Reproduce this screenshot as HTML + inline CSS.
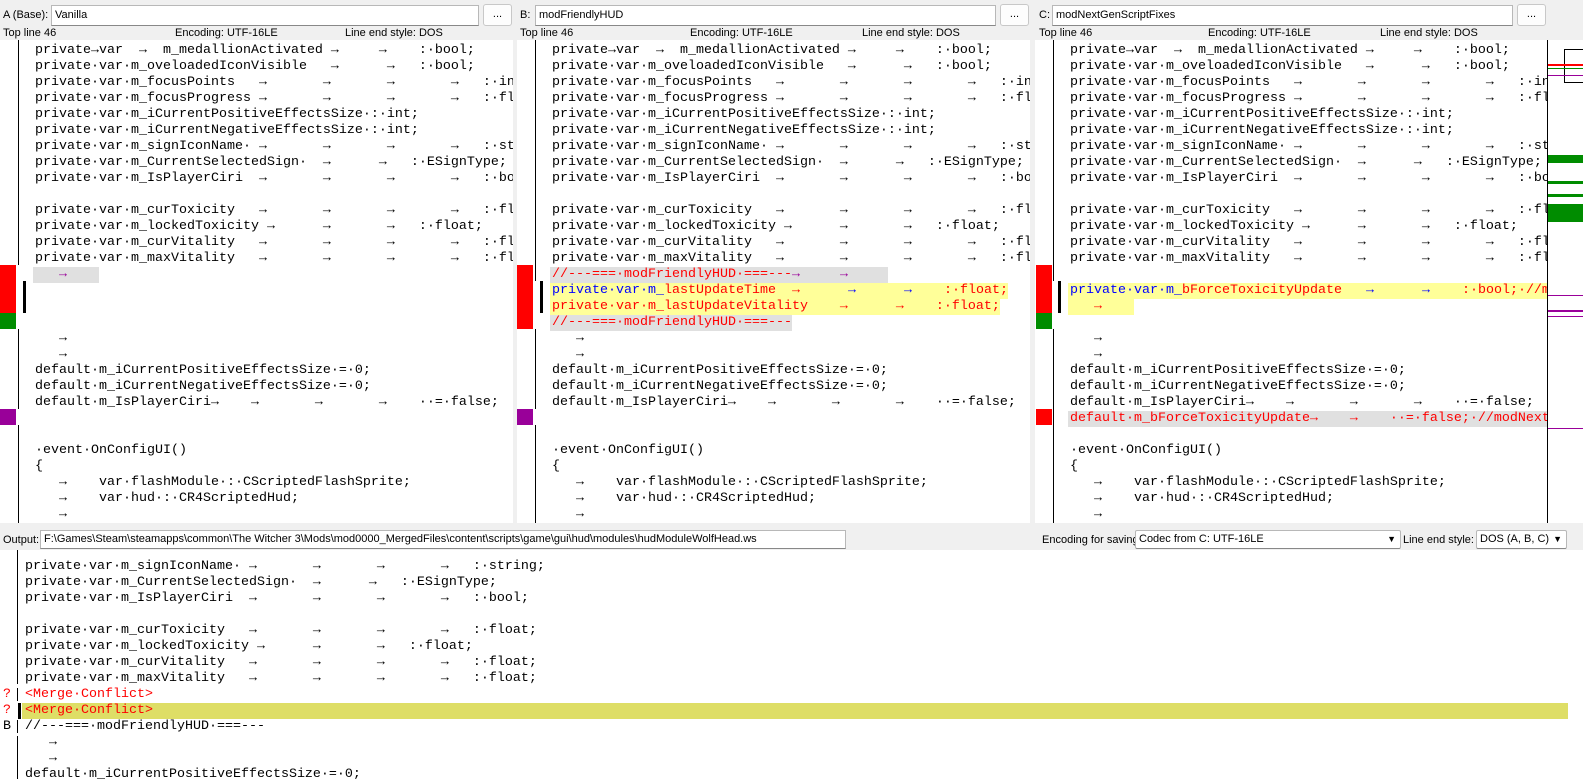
<!DOCTYPE html>
<html><head><meta charset="utf-8"><style>
*{margin:0;padding:0;box-sizing:border-box}
body{width:1583px;height:779px;background:#f0f0f0;position:relative;overflow:hidden;font-family:"Liberation Sans",sans-serif;font-size:11px;color:#000}
.abs{position:absolute}
.inp{position:absolute;height:21px;background:#fff;border:1px solid #b8b8b8;border-bottom-color:#888;font-size:11px;line-height:19px;padding-left:3px;white-space:nowrap;overflow:hidden}
.btn{position:absolute;height:22px;width:29px;background:#fdfdfd;border:1px solid #c8c8c8;border-radius:3px;text-align:center;line-height:18px}
.lbl{position:absolute;font-size:11px;white-space:nowrap}
.pane{position:absolute;top:40px;height:483px;background:#fff;overflow:hidden}
.code{position:absolute;font-family:"Liberation Mono",monospace;font-size:13.33px;line-height:16px;white-space:pre}
.ln{height:16px;display:block}
.g{background:#e0e0e0;display:inline-block}
.y{background:#ffff99;display:inline-block}
.r{color:#f00}.b{color:#00f}.p{color:#909}
.mk{position:absolute;width:16px}
.vl{position:absolute;width:1px;background:#000}
.bar{position:absolute;width:3px;background:#000}
</style></head><body>

<div class="lbl" style="left:3px;top:9px">A (Base):</div>
<div class="inp" style="left:51px;top:5px;width:428px">Vanilla</div>
<div class="btn" style="left:483px;top:4px">...</div>
<div class="lbl" style="left:520px;top:9px">B:</div>
<div class="inp" style="left:535px;top:5px;width:461px">modFriendlyHUD</div>
<div class="btn" style="left:1000px;top:4px">...</div>
<div class="lbl" style="left:1039px;top:9px">C:</div>
<div class="inp" style="left:1052px;top:5px;width:461px">modNextGenScriptFixes</div>
<div class="btn" style="left:1517px;top:4px">...</div>

<div class="lbl" style="left:3px;top:27px">Top line 46</div>
<div class="lbl" style="left:175px;top:27px">Encoding: UTF-16LE</div>
<div class="lbl" style="left:345px;top:27px">Line end style: DOS</div>
<div class="lbl" style="left:520px;top:27px">Top line 46</div>
<div class="lbl" style="left:690px;top:27px">Encoding: UTF-16LE</div>
<div class="lbl" style="left:862px;top:27px">Line end style: DOS</div>
<div class="lbl" style="left:1039px;top:27px">Top line 46</div>
<div class="lbl" style="left:1208px;top:27px">Encoding: UTF-16LE</div>
<div class="lbl" style="left:1380px;top:27px">Line end style: DOS</div>

<!-- Pane A -->
<div class="pane" style="left:0;width:513px">
 <div class="mk" style="left:0;top:225px;height:48px;background:#f00"></div>
 <div class="mk" style="left:0;top:273px;height:16px;background:#008c00"></div>
 <div class="mk" style="left:0;top:369px;height:16px;background:#909"></div>
 <div class="vl" style="left:18px;top:0;height:225px"></div>
 <div class="bar" style="left:23px;top:241px;height:32px"></div>
 <div class="vl" style="left:18px;top:289px;height:80px"></div>
 <div class="vl" style="left:18px;top:385px;height:100px"></div>
 <div class="code" style="left:35px;top:3px"><span class="ln">private→var  →  m_medallionActivated →     →    :·bool;</span><span class="ln">private·var·m_oveloadedIconVisible   →      →   :·bool;</span><span class="ln">private·var·m_focusPoints   →       →       →       →   :·int;</span><span class="ln">private·var·m_focusProgress →       →       →       →   :·float;</span><span class="ln">private·var·m_iCurrentPositiveEffectsSize·:·int;</span><span class="ln">private·var·m_iCurrentNegativeEffectsSize·:·int;</span><span class="ln">private·var·m_signIconName· →       →       →       →   :·string;</span><span class="ln">private·var·m_CurrentSelectedSign·  →      →   :·ESignType;</span><span class="ln">private·var·m_IsPlayerCiri  →       →       →       →   :·bool;</span><span class="ln"> </span><span class="ln">private·var·m_curToxicity   →       →       →       →   :·float;</span><span class="ln">private·var·m_lockedToxicity →      →       →   :·float;</span><span class="ln">private·var·m_curVitality   →       →       →       →   :·float;</span><span class="ln">private·var·m_maxVitality   →       →       →       →   :·float;</span><span class="ln"><span class="g" style="margin-left:-2px;padding-left:2px">   <span class="p">→</span>    </span></span><span class="ln"> </span><span class="ln"> </span><span class="ln"> </span><span class="ln">   →</span><span class="ln">   →</span><span class="ln">default·m_iCurrentPositiveEffectsSize·=·0;</span><span class="ln">default·m_iCurrentNegativeEffectsSize·=·0;</span><span class="ln">default·m_IsPlayerCiri→    →       →       →    ··=·false;</span><span class="ln"> </span><span class="ln"> </span><span class="ln">·event·OnConfigUI()</span><span class="ln">{</span><span class="ln">   →    var·flashModule·:·CScriptedFlashSprite;</span><span class="ln">   →    var·hud·:·CR4ScriptedHud;</span><span class="ln">   →</span><span class="ln">        m_anchorName·=·"mcAnchorWolfHead";</span></div>
</div>

<!-- Pane B -->
<div class="pane" style="left:517px;width:513px">
 <div class="mk" style="left:0;top:225px;height:64px;background:#f00"></div>
 <div class="mk" style="left:0;top:369px;height:16px;background:#909"></div>
 <div class="vl" style="left:18px;top:0;height:241px"></div>
 <div class="bar" style="left:23px;top:241px;height:32px"></div>
 <div class="vl" style="left:18px;top:289px;height:80px"></div>
 <div class="vl" style="left:18px;top:385px;height:100px"></div>
 <div class="code" style="left:35px;top:3px"><span class="ln">private→var  →  m_medallionActivated →     →    :·bool;</span><span class="ln">private·var·m_oveloadedIconVisible   →      →   :·bool;</span><span class="ln">private·var·m_focusPoints   →       →       →       →   :·int;</span><span class="ln">private·var·m_focusProgress →       →       →       →   :·float;</span><span class="ln">private·var·m_iCurrentPositiveEffectsSize·:·int;</span><span class="ln">private·var·m_iCurrentNegativeEffectsSize·:·int;</span><span class="ln">private·var·m_signIconName· →       →       →       →   :·string;</span><span class="ln">private·var·m_CurrentSelectedSign·  →      →   :·ESignType;</span><span class="ln">private·var·m_IsPlayerCiri  →       →       →       →   :·bool;</span><span class="ln"> </span><span class="ln">private·var·m_curToxicity   →       →       →       →   :·float;</span><span class="ln">private·var·m_lockedToxicity →      →       →   :·float;</span><span class="ln">private·var·m_curVitality   →       →       →       →   :·float;</span><span class="ln">private·var·m_maxVitality   →       →       →       →   :·float;</span><span class="ln"><span class="g r" style="margin-left:-2px;padding-left:2px">//---===·modFriendlyHUD·===---<span class="p">→</span>     <span class="p">→</span>     </span></span><span class="ln"><span class="y" style="margin-left:-2px;padding-left:2px"><span class="b">private·var·m_</span><span class="r">lastUpdateTime  →</span>      <span class="b">→</span>      <span class="b">→</span>    <span class="r">:·float;</span></span></span><span class="ln"><span class="y r" style="margin-left:-2px;padding-left:2px">private·var·m_lastUpdateVitality    →      →    :·float;</span></span><span class="ln"><span class="g r" style="margin-left:-2px;padding-left:2px">//---===·modFriendlyHUD·===---</span></span><span class="ln">   →</span><span class="ln">   →</span><span class="ln">default·m_iCurrentPositiveEffectsSize·=·0;</span><span class="ln">default·m_iCurrentNegativeEffectsSize·=·0;</span><span class="ln">default·m_IsPlayerCiri→    →       →       →    ··=·false;</span><span class="ln"> </span><span class="ln"> </span><span class="ln">·event·OnConfigUI()</span><span class="ln">{</span><span class="ln">   →    var·flashModule·:·CScriptedFlashSprite;</span><span class="ln">   →    var·hud·:·CR4ScriptedHud;</span><span class="ln">   →</span><span class="ln">        m_anchorName·=·"mcAnchorWolfHead";</span></div>
</div>

<!-- Pane C -->
<div class="pane" style="left:1035px;width:512px">
 <div class="mk" style="left:1px;top:225px;height:48px;background:#f00"></div>
 <div class="mk" style="left:1px;top:273px;height:16px;background:#008c00"></div>
 <div class="mk" style="left:1px;top:369px;height:16px;background:#f00"></div>
 <div class="vl" style="left:18px;top:0;height:241px"></div>
 <div class="bar" style="left:23px;top:241px;height:32px"></div>
 <div class="vl" style="left:18px;top:289px;height:200px"></div>
 <div class="code" style="left:35px;top:3px"><span class="ln">private→var  →  m_medallionActivated →     →    :·bool;</span><span class="ln">private·var·m_oveloadedIconVisible   →      →   :·bool;</span><span class="ln">private·var·m_focusPoints   →       →       →       →   :·int;</span><span class="ln">private·var·m_focusProgress →       →       →       →   :·float;</span><span class="ln">private·var·m_iCurrentPositiveEffectsSize·:·int;</span><span class="ln">private·var·m_iCurrentNegativeEffectsSize·:·int;</span><span class="ln">private·var·m_signIconName· →       →       →       →   :·string;</span><span class="ln">private·var·m_CurrentSelectedSign·  →      →   :·ESignType;</span><span class="ln">private·var·m_IsPlayerCiri  →       →       →       →   :·bool;</span><span class="ln"> </span><span class="ln">private·var·m_curToxicity   →       →       →       →   :·float;</span><span class="ln">private·var·m_lockedToxicity →      →       →   :·float;</span><span class="ln">private·var·m_curVitality   →       →       →       →   :·float;</span><span class="ln">private·var·m_maxVitality   →       →       →       →   :·float;</span><span class="ln"> </span><span class="ln"><span class="y" style="margin-left:-2px;padding-left:2px;width:480px"><span class="b">private·var·m_</span><span class="r">bForceToxicityUpdate</span>   <span class="b">→</span>      <span class="b">→</span>    <span class="r">:·bool;·//modNextGen</span></span></span><span class="ln"><span class="y r" style="margin-left:-2px;padding-left:2px">   →    </span></span><span class="ln"> </span><span class="ln">   →</span><span class="ln">   →</span><span class="ln">default·m_iCurrentPositiveEffectsSize·=·0;</span><span class="ln">default·m_iCurrentNegativeEffectsSize·=·0;</span><span class="ln">default·m_IsPlayerCiri→    →       →       →    ··=·false;</span><span class="ln"><span class="g r" style="margin-left:-2px;padding-left:2px;width:480px">default·m_bForceToxicityUpdate→    →    ··=·false;·//modNextGen</span></span><span class="ln"> </span><span class="ln">·event·OnConfigUI()</span><span class="ln">{</span><span class="ln">   →    var·flashModule·:·CScriptedFlashSprite;</span><span class="ln">   →    var·hud·:·CR4ScriptedHud;</span><span class="ln">   →</span><span class="ln">        m_anchorName·=·"mcAnchorWolfHead";</span></div>
</div>

<!-- overview strip -->
<div class="abs" style="left:1547px;top:40px;width:36px;height:483px;background:#fff;border-left:1px solid #000"></div>
<div class="abs" style="left:1564px;top:49px;width:19px;height:34px;border:1px solid #000;border-right:none"></div>
<div class="abs" style="left:1548px;top:64px;width:35px;height:2px;background:#f00"></div>
<div class="abs" style="left:1548px;top:68px;width:35px;height:1px;background:#008c00"></div>
<div class="abs" style="left:1548px;top:75px;width:35px;height:1px;background:#909"></div>
<div class="abs" style="left:1548px;top:155px;width:35px;height:8px;background:#008c00"></div>
<div class="abs" style="left:1548px;top:181px;width:35px;height:3px;background:#008c00"></div>
<div class="abs" style="left:1548px;top:194px;width:35px;height:3px;background:#008c00"></div>
<div class="abs" style="left:1548px;top:204px;width:35px;height:18px;background:#008c00"></div>
<div class="abs" style="left:1548px;top:295px;width:35px;height:1px;background:#909"></div>
<div class="abs" style="left:1548px;top:310px;width:35px;height:2px;background:#909"></div>
<div class="abs" style="left:1548px;top:316px;width:35px;height:1px;background:#909"></div>
<div class="abs" style="left:1548px;top:428px;width:35px;height:1px;background:#909"></div>

<!-- output row -->
<div class="lbl" style="left:3px;top:534px">Output:</div>
<div class="inp" style="left:40px;top:530px;width:806px;height:19px;line-height:17px">F:\Games\Steam\steamapps\common\The Witcher 3\Mods\mod0000_MergedFiles\content\scripts\game\gui\hud\modules\hudModuleWolfHead.ws</div>
<div class="lbl" style="left:1042px;top:534px">Encoding for saving:</div>
<div class="inp" style="left:1135px;top:530px;width:266px;height:19px;line-height:17px;border-radius:2px">Codec from C: UTF-16LE<span style="position:absolute;right:4px;font-size:9px">▼</span></div>
<div class="lbl" style="left:1403px;top:534px">Line end style:</div>
<div class="inp" style="left:1476px;top:530px;width:91px;height:19px;line-height:17px;border-radius:2px">DOS (A, B, C)<span style="position:absolute;right:4px;font-size:9px">▼</span></div>

<!-- output pane -->
<div class="abs" style="left:0;top:550px;width:1583px;height:229px;background:#fff;overflow:hidden">
 <div class="abs" style="top:153px;width:1546px;height:16px;background:#dede66;left:22px"></div>
 <div class="vl" style="left:17px;top:0;height:134px"></div>
 <div class="vl" style="left:17px;top:138px;height:13px"></div>
 <div class="bar" style="left:18px;top:153px;height:16px"></div>
 <div class="vl" style="left:17px;top:170px;height:13px"></div>
 <div class="vl" style="left:17px;top:186px;height:60px"></div>
 <div class="code r" style="left:3px;top:137px">?</div>
 <div class="code r" style="left:3px;top:153px">?</div>
 <div class="code" style="left:3px;top:169px">B</div>
 <div class="code" style="left:25px;top:9px"><span class="ln">private·var·m_signIconName· →       →       →       →   :·string;</span><span class="ln">private·var·m_CurrentSelectedSign·  →      →   :·ESignType;</span><span class="ln">private·var·m_IsPlayerCiri  →       →       →       →   :·bool;</span><span class="ln"> </span><span class="ln">private·var·m_curToxicity   →       →       →       →   :·float;</span><span class="ln">private·var·m_lockedToxicity →      →       →   :·float;</span><span class="ln">private·var·m_curVitality   →       →       →       →   :·float;</span><span class="ln">private·var·m_maxVitality   →       →       →       →   :·float;</span><span class="ln r">&lt;Merge·Conflict&gt;</span><span class="ln r">&lt;Merge·Conflict&gt;</span><span class="ln">//---===·modFriendlyHUD·===---</span><span class="ln">   →</span><span class="ln">   →</span><span class="ln">default·m_iCurrentPositiveEffectsSize·=·0;</span></div>
</div>
</body></html>
